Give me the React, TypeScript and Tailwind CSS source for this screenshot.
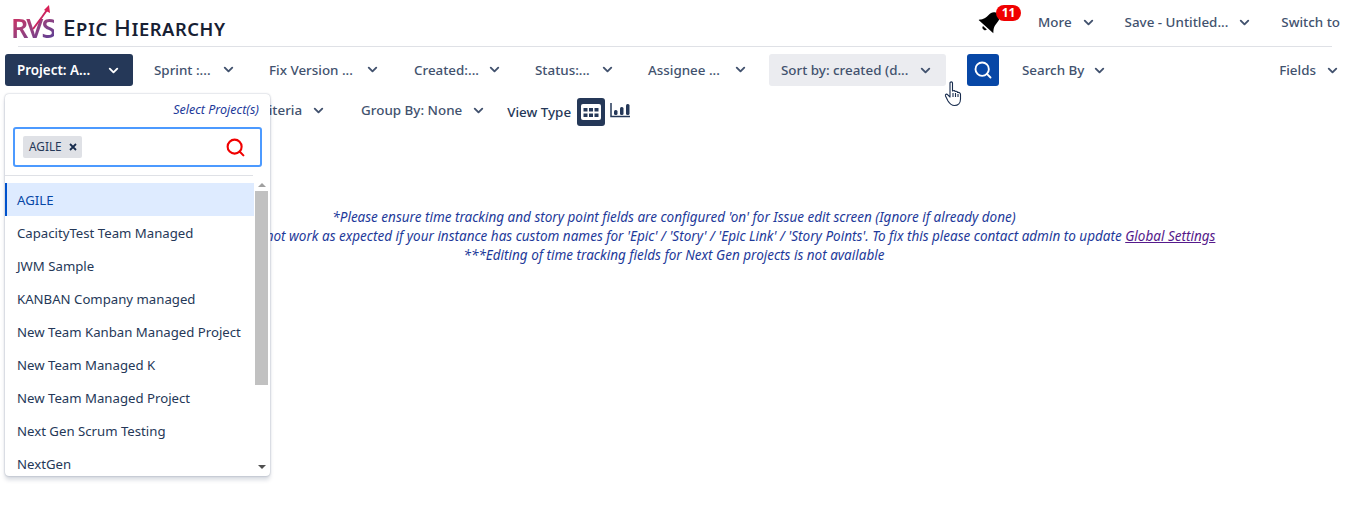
import { ChevronDown, Search } from 'lucide-react'

const projects = [
  'AGILE',
  'CapacityTest Team Managed',
  'JWM Sample',
  'KANBAN Company managed',
  'New Team Kanban Managed Project',
  'New Team Managed K',
  'New Team Managed Project',
  'Next Gen Scrum Testing',
  'NextGen',
]

const filters = [
  { label: 'Sprint :...', width: 'w-[115px]', pad: 'pr-[12px]' },
  { label: 'Fix Version ...', width: 'w-[145px]', pad: 'pr-[13px]' },
  { label: 'Created:...', width: 'w-[121px]', pad: 'pr-[12px]' },
  { label: 'Status:...', width: 'w-[113px]', pad: 'pr-[12px]' },
  { label: 'Assignee ...', width: 'w-[142px]', pad: 'pr-[21px]' },
]

function Chevron({ className = 'text-[#42526e]' }: { className?: string }) {
  return <ChevronDown size={15} strokeWidth={3} className={className} />
}

function Header() {
  return (
    <header className="flex h-[46px] items-center justify-between pb-[2px]">
      <div className="flex items-center pl-[6px]">
        <div className="relative h-[38px] w-[42px]">
          <span className="absolute left-0 top-[11px] bg-gradient-to-br from-[#d8265c] to-[#553c98] bg-clip-text text-[27px] font-semibold leading-[28px] tracking-[-2px] text-transparent">
            RVS
          </span>
          <svg viewBox="0 0 42 38" className="absolute left-0 top-0 h-[38px] w-[42px]">
            <path d="M22 26 L31 14 L36 7" fill="none" stroke="#c9245f" strokeWidth="2" />
            <path d="M38 2 L39 10 L33 7 Z" fill="#d81f56" />
          </svg>
        </div>
        <span className="ml-[10px] mt-[11px] text-[22.5px] font-medium leading-[30px] tracking-[0.55px] text-[#172033] [font-variant:small-caps]">
          Epic Hierarchy
        </span>
      </div>
      <div className="flex items-center text-[13.4px] font-medium text-[#42526e]">
        <div className="relative mr-[33px] h-[24px] w-[24px]">
          <svg viewBox="0 0 24 24" className="absolute left-[-3px] top-[-1px] h-[25px] w-[25px]">
            <g transform="rotate(42 12 12)">
              <path d="M12 2 C8 2 6.5 5 6.5 9 C6.5 14 4.5 16 2.5 18.5 H21.5 C19.5 16 17.5 14 17.5 9 C17.5 5 16 2 12 2 Z" fill="#000" />
              <path d="M9.5 20 H14.5 C14.5 23 9.5 23 9.5 20 Z" fill="#000" />
            </g>
          </svg>
          <span className="absolute left-[15px] top-[-5px] flex h-[16px] w-[25px] items-center justify-center rounded-full bg-[#f00000] text-[12px] font-bold text-white">
            11
          </span>
        </div>
        <span>More</span>
        <Chevron className="ml-[9px] text-[#42526e]" />
        <span className="ml-[29px] whitespace-nowrap">Save - Untitled...</span>
        <Chevron className="ml-[9px] text-[#42526e]" />
        <span className="ml-[29px] mr-[7px] whitespace-nowrap">Switch to</span>
      </div>
    </header>
  )
}

function Toolbar() {
  return (
    <div className="flex h-[32px] items-center text-[13.4px] font-medium text-[#42526e]">
      <button className="flex h-[32px] w-[128px] items-center justify-between whitespace-nowrap rounded-[3px] bg-[#253858] px-[12px] font-semibold text-white">
        Project: A...
        <Chevron className="text-white" />
      </button>
      {filters.map((f) => (
        <button key={f.label} className={`flex items-center justify-between whitespace-nowrap pl-[21px] ${f.width} ${f.pad}`}>
          {f.label}
          <Chevron />
        </button>
      ))}
      <button className="flex h-[32px] w-[177px] items-center justify-between whitespace-nowrap rounded-[3px] bg-[#ebecf0] pl-[12px] pr-[13px]">
        Sort by: created (d...
        <Chevron />
      </button>
      <button className="ml-[21px] flex h-[32px] w-[32px] items-center justify-center rounded-[3px] bg-[#0747a6]">
        <Search size={20} strokeWidth={2.25} className="text-white" />
      </button>
      <span className="ml-[23px]">Search By</span>
      <Chevron className="ml-[8px] text-[#42526e]" />
      <span className="ml-auto">Fields</span>
      <Chevron className="ml-[9px] mr-[7px] text-[#42526e]" />
    </div>
  )
}

function SecondRow() {
  return (
    <div className="mt-[11px] flex h-[30px] items-center text-[13.4px] font-medium text-[#42526e]">
      <span className="mb-[3px] ml-[203px] whitespace-nowrap">Search Criteria</span>
      <Chevron className="mb-[3px] ml-[9px] text-[#42526e]" />
      <span className="mb-[3px] ml-[35px] whitespace-nowrap">Group By: None</span>
      <Chevron className="mb-[3px] ml-[9px] text-[#42526e]" />
      <span className="ml-[21px] whitespace-nowrap text-[#253858]">View Type</span>
      <button className="ml-[6px] flex h-[28px] w-[28px] items-center justify-center rounded-[3px] bg-[#253858]">
        <svg viewBox="0 0 20 16" className="h-[16px] w-[20px]">
          <rect x="0" y="0" width="20" height="16" rx="2" fill="#fff" />
          {[2.5, 8, 13.5].map((x) =>
            [4, 9.5].map((y) => <rect key={`${x}-${y}`} x={x} y={y} width="4" height="3.5" fill="#253858" />),
          )}
        </svg>
      </button>
      <svg viewBox="0 0 20 16" className="mb-[4px] ml-[5px] h-[16px] w-[20px]">
        <path d="M1 1 V14.5 H20" fill="none" stroke="#253858" strokeWidth="1.5" />
        <rect x="4" y="8" width="3.5" height="5" rx="1.5" fill="#253858" />
        <rect x="10" y="5" width="3.5" height="8" rx="1.5" fill="#253858" />
        <rect x="16" y="2" width="3.5" height="11" rx="1.5" fill="#253858" />
      </svg>
    </div>
  )
}

function Notes() {
  return (
    <div className="mr-[4px] mt-[81px] text-center text-[13.5px] italic leading-[19px] text-[#1e3a9a]">
      <p>*Please ensure time tracking and story point fields are configured 'on' for Issue edit screen (Ignore if already done)</p>
      <p>
        **Epic Hierarchy may not work as expected if your instance has custom names for 'Epic' / 'Story' / 'Epic Link' / 'Story Points'. To fix this please contact admin to update{' '}
        <a className="text-[#551a8b] underline">Global Settings</a>
      </p>
      <p>***Editing of time tracking fields for Next Gen projects is not available</p>
    </div>
  )
}

function ProjectDropdown() {
  return (
    <div className="absolute left-[5px] top-[94px] h-[382px] w-[265px] rounded-[4px] bg-white shadow-[0_0_2px_rgba(9,30,66,0.35),0_4px_4px_rgba(9,30,66,0.15)]">
      <p className="pr-[11px] pt-[8px] text-right text-[12.5px] italic leading-[16px] text-[#1e3a9a]">Select Project(s)</p>
      <div className="mx-[8px] mt-[9px] flex h-[40px] items-center justify-between rounded-[3px] border-2 border-[#4c9aff] pl-[8px] pr-[14px]">
        <span className="flex h-[22px] items-center rounded-[2px] bg-[#dfe1e6] pl-[6px] pr-[5px] text-[11.8px] text-[#253858]">
          AGILE
          <svg viewBox="0 0 8 8" className="ml-[7px] h-[8px] w-[8px]">
            <path d="M1 1 L7 7 M7 1 L1 7" stroke="#172b4d" strokeWidth="1.8" />
          </svg>
        </span>
        <Search size={21} strokeWidth={2.4} className="text-[#f00000]" />
      </div>
      <div className="mt-[8px] h-[1px] w-[248px] bg-[#dfe1e6]" />
      <div className="relative mt-[6px] h-[293px] overflow-hidden">
        <ul className="pt-[1px] text-[13.2px] text-[#253858]">
          {projects.map((p, i) => (
            <li
              key={p}
              className={`flex h-[33px] w-[249px] items-center whitespace-nowrap pt-[2px] ${i === 0 ? 'border-l-2 border-[#0052cc] bg-[#deebff] pl-[10px] text-[#0747a6]' : 'pl-[12px]'}`}
            >
              {p}
            </li>
          ))}
        </ul>
        <div className="absolute right-[2px] top-0 flex h-full w-[13px] flex-col items-center">
          <span className="mt-[1px] h-0 w-0 border-x-[4px] border-b-[4px] border-x-transparent border-b-[#a0a0a0]" />
          <div className="mt-[4px] h-[194px] w-[13px] bg-[#c1c1c1]" />
          <span className="mt-auto mb-[6px] h-0 w-0 border-x-[4px] border-t-[4px] border-x-transparent border-t-[#505050]" />
        </div>
      </div>
    </div>
  )
}

export default function App() {
  return (
    <div className="relative h-[517px] overflow-hidden bg-white pl-[5px] font-['Noto_Sans',sans-serif]">
      <Header />
      <div className="ml-[13px] mr-[15px] h-[1px] bg-[#dfe1e6]" />
      <div className="mt-[7px]">
        <Toolbar />
        <SecondRow />
        <Notes />
      </div>
      <ProjectDropdown />
      <svg viewBox="0 0 20 26" className="absolute left-[944px] top-[81px] h-[26px] w-[20px]">
        <path
          d="M6 2 C6 0.5 8.5 0.5 8.5 2 V10 C10 9 11 9.5 11 10.5 C12.5 10 13.5 10.5 13.5 11.5 C15 11 16.5 12 16.5 13.5 V18 C16.5 22 14 24.5 10.5 24.5 C7 24.5 5.5 22.5 4 20 L1.5 15 C1 13.5 2.5 12.5 3.8 13.8 L6 16 Z M9 12 V16 M11.5 12 V16 M14 13 V16"
          fill="#fff"
          stroke="#172b4d"
          strokeWidth="1.1"
          strokeLinejoin="round"
        />
      </svg>
    </div>
  )
}
